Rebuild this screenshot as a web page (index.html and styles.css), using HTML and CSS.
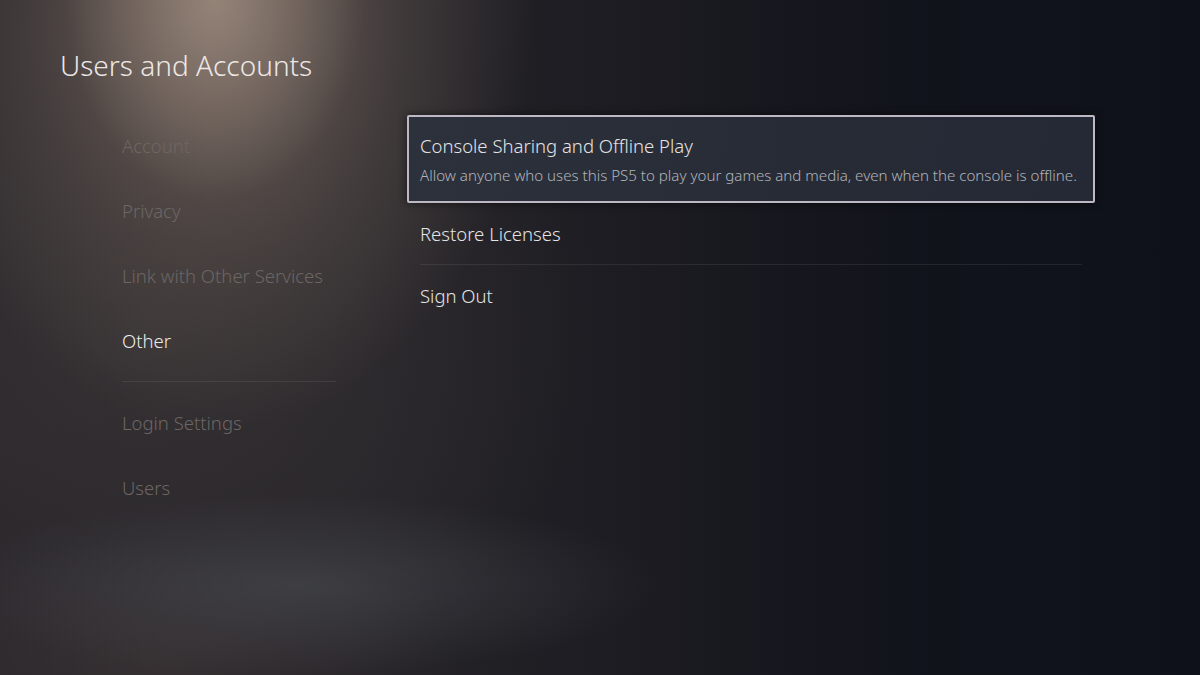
FILE: index.html
```html
<!DOCTYPE html>
<html lang="en">
<head>
  <meta charset="UTF-8">
  <title>Users and Accounts</title>
  <link rel="stylesheet" href="styles.css">
</head>
<body>

<div class="screen">
  <!-- Header -->
  <h1 class="page-title">Users and Accounts</h1>

  <div class="main">
    <!-- Left nav -->
    <ul class="side-nav">
      <li class="nav-item">Account</li>
      <li class="nav-item">Privacy</li>
      <li class="nav-item">Link with Other Services</li>
      <li class="nav-item active">Other</li>
      <li class="nav-sep"></li>
      <li class="nav-item">Login Settings</li>
      <li class="nav-item">Users</li>
    </ul>

    <!-- Options -->
    <div class="options">
      <div class="option focused">
        <div class="opt-title">Console Sharing and Offline Play</div>
        <div class="opt-desc">Allow anyone who uses this PS5 to play your games and media, even when the console is offline.</div>
      </div>
      <div class="option">
        <div class="opt-title">Restore Licenses</div>
      </div>
      <div class="opt-sep"></div>
      <div class="option">
        <div class="opt-title">Sign Out</div>
      </div>
    </div>
  </div>
</div>

</body>
</html>
```

FILE: styles.css
```css
*{box-sizing:border-box}
html,body{margin:0;padding:0;height:100%}
body{font-family:'Noto Sans','Open Sans',sans-serif;font-weight:300;color:#e6e6e6;overflow:hidden;
  background:
    radial-gradient(ellipse 150px 200px at 215px 0,rgba(175,155,140,.55),rgba(160,140,125,0) 100%),
    radial-gradient(ellipse 320px 430px at 215px 0,rgba(140,122,110,.75),rgba(120,105,95,.3) 60%,rgba(90,80,75,0) 100%),
    radial-gradient(ellipse 360px 90px at 300px 585px,rgba(78,82,88,.5),rgba(70,72,78,0) 100%),
    radial-gradient(ellipse 300px 120px at 160px 660px,rgba(80,68,66,.35),rgba(70,60,60,0) 100%),
    radial-gradient(ellipse 450px 380px at 150px 330px,rgba(62,57,57,.6),rgba(60,55,55,0) 100%),
    linear-gradient(to right,#28252a 0%,#262429 30%,#1b1b21 55%,#12141c 75%,#0f111a 100%)}
.screen{height:675px;display:flex;flex-direction:column}
.page-title{margin:0;padding:45px 0 0 60px;font-size:28px;line-height:40px;font-weight:300;color:#ece8e6}
.main{display:flex;margin-top:28px}
.side-nav{list-style:none;margin:0;padding:0 0 0 122px;width:407px}
.nav-item{height:65px;line-height:65px;font-size:18.5px;color:#6c6664;white-space:nowrap}
.nav-item.active{color:#ececec}
.nav-sep{height:1px;width:214px;margin:8px 0 8px;background:rgba(255,255,255,.08)}
.options{width:688px;margin-top:2px}
.option{height:61px;padding:0 13px;display:flex;flex-direction:column;justify-content:center}
.option .opt-title{font-size:18.5px;line-height:26px;color:#e4e4e6}
.option.focused{height:88px;justify-content:flex-start;padding:16px 11px 0;border:2px solid #bdb8c3;border-radius:2px;background:linear-gradient(100deg,#2d313b,#262b36 60%,#242935);box-shadow:0 0 8px rgba(0,0,0,.55)}
.opt-desc{margin-top:6px;font-size:15.1px;line-height:20px;color:#b1b4bc;white-space:nowrap}
.opt-sep{height:1px;margin:0 13px;background:rgba(255,255,255,.08)}
```
